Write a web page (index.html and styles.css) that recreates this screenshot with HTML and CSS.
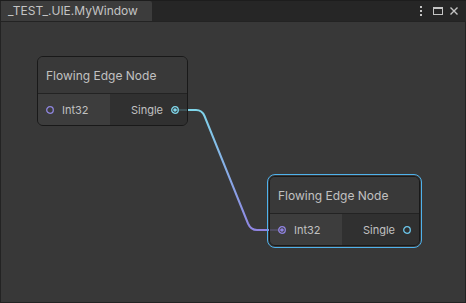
FILE: index.html
```html
<!DOCTYPE html>
<html>
<head>
<meta charset="utf-8">
<link rel="stylesheet" href="styles.css">
</head>
<body>
<div class="window">
  <div class="tabbar">
    <div class="tab">_TEST_.UIE.MyWindow</div>
    <div class="tools">
      <svg class="tool kebab" width="6" height="12" viewBox="0 0 6 12"><rect x="2" y="1" width="2" height="2" fill="#c4c4c4"/><rect x="2" y="5" width="2" height="2" fill="#c4c4c4"/><rect x="2" y="9" width="2" height="2" fill="#c4c4c4"/></svg>
      <svg class="tool" width="12" height="12" viewBox="0 0 12 12"><rect x="1.5" y="2.5" width="9" height="7" fill="none" stroke="#c4c4c4" stroke-width="1"/><rect x="1" y="2" width="10" height="2" fill="#c4c4c4"/></svg>
      <svg class="tool" width="12" height="12" viewBox="0 0 12 12"><path d="M2.5 2.5 L9.5 9.5 M9.5 2.5 L2.5 9.5" stroke="#c4c4c4" stroke-width="1.4" fill="none"/></svg>
    </div>
  </div>
  <div class="canvas">
    <svg class="edges" width="464" height="280" viewBox="1 22 464 280">
      <defs>
        <linearGradient id="eg" gradientUnits="userSpaceOnUse" x1="196" y1="110" x2="262" y2="230">
          <stop offset="0" stop-color="#7fd6ea"/>
          <stop offset="1" stop-color="#9083e2"/>
        </linearGradient>
      </defs>
      <path d="M175 110 H196 Q202 110 204.5 116 L248 223.5 Q250.8 230 257 230 H282" fill="none" stroke="url(#eg)" stroke-width="2"/>
    </svg>

    <div class="node node-a">
      <div class="node-border">
        <div class="title">Flowing Edge Node</div>
        <div class="ports">
          <div class="port-in">
            <svg class="port" width="8" height="8" viewBox="0 0 8 8"><circle cx="4" cy="4" r="3.3" fill="none" stroke="#8f86e0" stroke-width="1.3"/></svg>
            <span>Int32</span>
          </div>
          <div class="port-out">
            <span>Single</span>
            <svg class="port" width="8" height="8" viewBox="0 0 8 8"><circle cx="4" cy="4" r="3.3" fill="none" stroke="#7fd6ea" stroke-width="1.3"/><circle cx="4" cy="4" r="1.8" fill="#7fd6ea"/></svg>
          </div>
        </div>
      </div>
    </div>

    <div class="node node-b selected">
      <div class="node-border">
        <div class="title">Flowing Edge Node</div>
        <div class="ports">
          <div class="port-in">
            <svg class="port" width="8" height="8" viewBox="0 0 8 8"><circle cx="4" cy="4" r="3.3" fill="none" stroke="#9083e2" stroke-width="1.3"/><circle cx="4" cy="4" r="1.8" fill="#9083e2"/></svg>
            <span>Int32</span>
          </div>
          <div class="port-out">
            <span>Single</span>
            <svg class="port" width="8" height="8" viewBox="0 0 8 8"><circle cx="4" cy="4" r="3.3" fill="none" stroke="#6cc6ea" stroke-width="1.3"/></svg>
          </div>
        </div>
      </div>
    </div>
  </div>
</div>
</body>
</html>
```
FILE: styles.css
```css
html, body {
  margin: 0;
  padding: 0;
  background: #282828;
}

body {
  font-family: Inter, "Noto Sans", "Liberation Sans", sans-serif;
  color: #c4c4c4;
}

.window {
  width: 466px;
  height: 303px;
  display: flex;
  flex-direction: column;
  box-sizing: border-box;
}

.tabbar {
  height: 21px;
  display: flex;
  align-items: stretch;
  background: #262626;
  border-top: 1px solid #1d1d1d;
  box-sizing: border-box;
}

.tab {
  width: 152px;
  background: #3c3c3c;
  border-left: 1px solid #232323;
  border-top-right-radius: 2px;
  box-sizing: border-box;
  padding-left: 7px;
  font-size: 12px;
  line-height: 20px;
  color: #c4c4c4;
  white-space: nowrap;
}

.tools {
  margin-left: auto;
  display: flex;
  align-items: center;
  gap: 4px;
  padding-right: 6px;
}

.tool {
  display: block;
}

.kebab {
  margin-right: 4px;
}

.canvas {
  flex: 1;
  position: relative;
  background: #383838;
  border: 1px solid #232323;
  overflow: hidden;
}

.edges {
  position: absolute;
  left: 0;
  top: 0;
}

.node {
  position: absolute;
  width: 155px;
  box-sizing: border-box;
  border: 1px solid transparent;
  border-radius: 8px;
  padding: 1px;
}

.node-a {
  left: 34px;
  top: 32px;
}

.node-b {
  left: 266px;
  top: 152px;
}

.node.selected {
  border-color: #4fb2ec;
}

.node-border {
  border: 1px solid #191919;
  border-radius: 6px;
  overflow: hidden;
}

.title {
  height: 36px;
  background: #393939;
  border-bottom: 1px solid #232323;
  display: flex;
  align-items: center;
  padding-left: 8px;
  font-size: 12px;
  color: #c1c1c1;
}

.ports {
  display: flex;
  height: 31px;
  font-size: 11px;
  color: #c1c1c1;
}

.port-in {
  width: 72px;
  background: rgba(63, 63, 63, 0.8);
  display: flex;
  align-items: center;
  gap: 8px;
  padding-left: 8px;
  box-sizing: border-box;
}

.port-out {
  flex: 1;
  background: rgba(46, 46, 46, 0.8);
  display: flex;
  align-items: center;
  justify-content: flex-end;
  gap: 8px;
  padding-right: 8px;
}

.port {
  display: block;
  flex: none;
}
```
